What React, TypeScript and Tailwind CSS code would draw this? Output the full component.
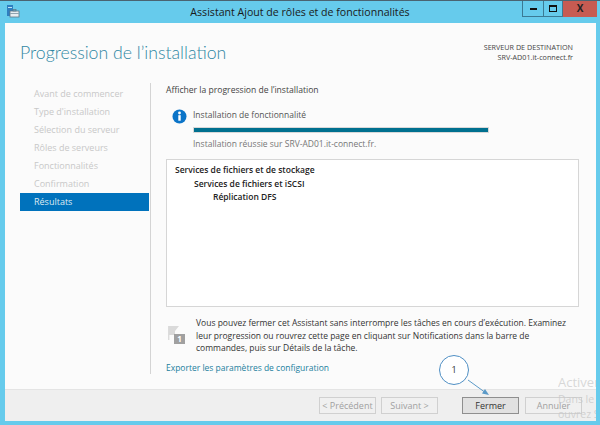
const Font = '[font-family:"Open_Sans","Noto_Sans",sans-serif]';

const steps = [
  "Avant de commencer",
  "Type d'installation",
  "Sélection du serveur",
  "Rôles de serveurs",
  "Fonctionnalités",
  "Confirmation",
];

const WizardButton = ({ label, active }: { label: string; active?: boolean }) => (
  <div
    className={
      active
        ? "flex h-[17px] w-[57px] items-center justify-center border border-[#8f8f8f] bg-[#e1e1e1] text-[9px] text-[#333]"
        : "flex h-[17px] w-[57px] items-center justify-center border border-[#d0d0d0] bg-[#f0f0f0] text-[9px] text-[#a0a0a0]"
    }
  >
    {label}
  </div>
);

export default function App() {
  return (
    <div className={`relative flex h-[425px] w-[600px] flex-col overflow-hidden border-t border-[#4a6472] bg-[#66cbec] ${Font}`}>
      {/* title bar */}
      <div className="relative flex h-[22px] shrink-0 items-center justify-center pt-[1px] text-[10.6px] text-[#1a1a1a]">
        <svg className="absolute left-[6px] top-[3px]" width="14" height="14" viewBox="0 0 14 14">
          <rect x="1" y="1" width="6" height="11" fill="#2f7fc0" />
          <rect x="2" y="3" width="4" height="1" fill="#bfe3f7" />
          <rect x="4" y="7" width="9" height="6" fill="#e6edf1" stroke="#5d7585" strokeWidth="0.8" />
          <rect x="7" y="5.5" width="3" height="1.5" fill="none" stroke="#5d7585" strokeWidth="0.7" />
          <rect x="4" y="9" width="9" height="1" fill="#8fa3b0" />
        </svg>
        Assistant Ajout de rôles et de fonctionnalités
        <div className="absolute right-[3px] top-[-1px] flex h-[17px]">
          <div className="flex w-[22px] items-center justify-center border border-t-0 border-[#3b7a94]">
            <div className="mt-[2px] h-[2px] w-[7px] bg-[#111]" />
          </div>
          <div className="flex w-[19px] items-center justify-center border-r border-b border-[#3b7a94]">
            <div className="h-[7px] w-[8px] border border-t-2 border-[#111]" />
          </div>
          <div className="flex w-[34px] items-center justify-center bg-[#c75b52] text-[10px] font-bold text-[#222]">
            X
          </div>
        </div>
      </div>

      {/* window body */}
      <div className="ml-[5px] mr-[4px] flex min-h-0 flex-1 flex-col bg-[#fbfbfb]">
        <div className="flex h-[60px] shrink-0 justify-between pl-[15px] pr-[22px]">
          <div className="pt-[18px] [font-family:Lato,sans-serif] text-[17.7px] font-light leading-[24px] text-[#2f87a3]">
            Progression de l’installation
          </div>
          <div className="pr-[1px] pt-[19px] text-right text-[7.2px] leading-[10px] text-[#444]">
            <div>SERVEUR DE DESTINATION</div>
            <div>SRV-AD01.it-connect.fr</div>
          </div>
        </div>

        <div className="flex min-h-0 flex-1">
          {/* steps */}
          <div className="flex h-[291px] w-[146px] shrink-0 flex-col border-r border-[#d4d4d4] pl-[15px] pr-[1px] pt-[2px]">
            {steps.map((step) => (
              <div key={step} className="flex h-[18px] shrink-0 items-center pl-[14px] text-[9px] text-[#c8c8c8]">
                {step}
              </div>
            ))}
            <div className="flex h-[18px] shrink-0 items-center bg-[#0072bc] pl-[14px] text-[9px] text-[#dfeaf2]">Résultats</div>
          </div>

          {/* content */}
          <div className="flex h-[291px] flex-1 flex-col pl-[15px]">
            <div className="pt-[1px] text-[8.6px] leading-[12px] text-[#444]">Afficher la progression de l’installation</div>
            <div className="mt-[13px] flex shrink-0 gap-[6px]">
              <svg className="ml-[6px] shrink-0" width="15" height="15" viewBox="0 0 15 15">
                <circle cx="7.5" cy="7.5" r="7" fill="#0b74c8" />
                <rect x="6.3" y="6.2" width="2.4" height="5.5" fill="#fff" />
                <circle cx="7.5" cy="4" r="1.4" fill="#fff" />
              </svg>
              <div className="flex-1">
                <div className="text-[8.5px] leading-[12px] text-[#555]">Installation de fonctionnalité</div>
                <div className="mt-[6px] h-[6px] w-[296px] border border-[#d8d8d8] bg-[#00708f]" />
                <div className="mt-[5px] text-[8.5px] leading-[12px] text-[#777]">Installation réussie sur SRV-AD01.it-connect.fr.</div>
              </div>
            </div>

            <div className="mt-[9px] h-[148px] w-[413px] shrink-0 border border-[#d6d6d6] bg-white pt-[3px] text-[8.5px] font-semibold leading-[13.5px] text-[#222]">
              <div className="pl-[8px]">Services de fichiers et de stockage</div>
              <div className="pl-[27px]">Services de fichiers et iSCSI</div>
              <div className="pl-[46px]">Réplication DFS</div>
            </div>

            <div className="mt-[10px] flex shrink-0">
              <svg className="ml-[2px] mt-[9px] shrink-0" width="18" height="19" viewBox="0 0 18 19">
                <path d="M0.7 0 L0.7 14" stroke="#dcdcdc" strokeWidth="1.4" />
                <path d="M1 0 L11 0 L7 5 L7 9 L1 9 Z" fill="#dadada" />
                <rect x="6" y="8" width="11" height="10" fill="#a0a0a0" />
                <text x="11.5" y="16" fontSize="8" fontWeight="bold" fill="#fff" textAnchor="middle">1</text>
              </svg>
              <div className="ml-[10px] text-[8.5px] leading-[12.5px] text-[#333]">
                Vous pouvez fermer cet Assistant sans interrompre les tâches en cours d’exécution. Examinez
                <br />
                leur progression ou rouvrez cette page en cliquant sur Notifications dans la barre de
                <br />
                commandes, puis sur Détails de la tâche.
              </div>
            </div>
            <div className="mt-[7px] text-[8.5px] leading-[12px] text-[#1c7f9e]">Exporter les paramètres de configuration</div>
          </div>
        </div>

        {/* footer */}
        <div className="flex h-[32px] shrink-0 items-center border-t border-[#e4e4e4] bg-[#efefef] pl-[314px]">
          <WizardButton label="< Précédent" />
          <div className="ml-[5px]">
            <WizardButton label="Suivant >" />
          </div>
          <div className="ml-[24px]">
            <WizardButton label="Fermer" active />
          </div>
          <div className="ml-[6px]">
            <WizardButton label="Annuler" />
          </div>
        </div>
      </div>
      <div className="h-[4px] shrink-0" />

      {/* callout over the close button */}
      <div className="absolute left-[439px] top-[354px] flex h-[30px] w-[30px] items-center justify-center rounded-full border border-[#4f8fc4] bg-white text-[9px] text-[#333]">
        1
      </div>
      <svg className="absolute left-[465px] top-[377px]" width="30" height="20" viewBox="0 0 30 20">
        <path d="M3 2 L21 15" stroke="#5b9ac8" strokeWidth="1" />
        <path d="M24 17 L17 15.5 L20 11 Z" fill="#5b9ac8" />
      </svg>

      {/* watermark */}
      <div className="absolute left-[558px] top-[372px] w-[38px] overflow-hidden whitespace-nowrap text-[13px] leading-[18px] text-[#c8c8c8]/70">
        Activer
      </div>
      <div className="absolute left-[558px] top-[391px] w-[38px] overflow-hidden whitespace-nowrap text-[10.5px] leading-[15px] text-[#c8c8c8]/80">
        Dans le
        <br />
        ouvrez S
      </div>
    </div>
  );
}
